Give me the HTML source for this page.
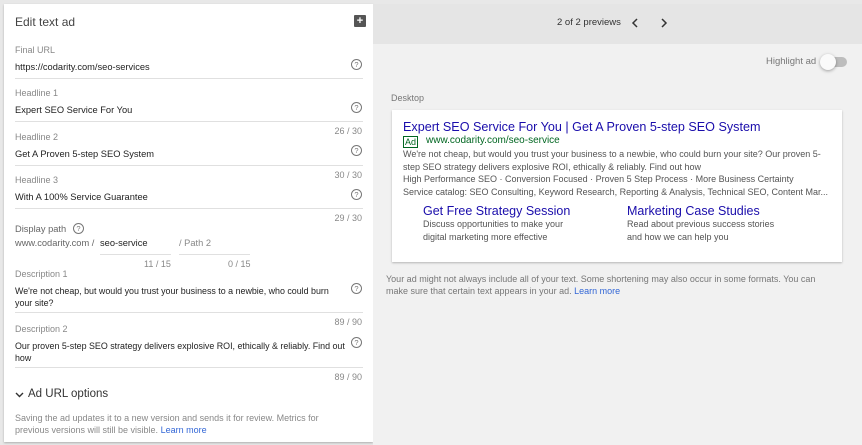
<!DOCTYPE html>
<html><head><meta charset="utf-8"><style>
*{margin:0;padding:0;box-sizing:border-box}
body{width:862px;height:445px;background:#e8e8e8;font-family:"Liberation Sans",Arial,sans-serif;position:relative;overflow:hidden;color:#202124}
.a{position:absolute;white-space:nowrap}
#left{position:absolute;left:4px;top:4px;width:369px;height:438px;background:#fff;box-shadow:0 1px 2px rgba(0,0,0,.25)}
.lbl{font-size:9px;color:#888}
.val{font-size:9.3px;color:#222}
.line{position:absolute;left:11px;width:348px;height:1px;background:#e0e0e0}
.cnt{font-size:9px;color:#888;right:11px}
.q{position:absolute;width:11px;height:11px;border:1px solid #777;border-radius:50%;font-size:7.5px;line-height:9px;text-align:center;color:#777}
#right{position:absolute;left:373px;top:4px;width:489px;height:441px;background:#f1f1f1}
#top{position:absolute;left:373px;top:4px;width:489px;height:40px;background:#e5e5e5}
.blue{color:#1a0dab}
</style></head><body>
<div id="left">
<div class="a" style="left:11px;top:11px;font-size:12px;color:#444">Edit text ad</div>
<div class="a" style="left:350px;top:11px;width:12px;height:12px;background:#555;border-radius:1px;color:#fff;font-size:11px;line-height:12px;text-align:center;font-weight:bold">+</div>

<div class="a lbl" style="left:11px;top:41px">Final URL</div>
<div class="a val" style="left:11px;top:58px">https://codarity.com/seo-services</div>
<div class="q" style="left:347px;top:55px">?</div>
<div class="line" style="top:74px"></div>

<div class="a lbl" style="left:11px;top:84px">Headline 1</div>
<div class="a val" style="left:11px;top:101px">Expert SEO Service For You</div>
<div class="q" style="left:347px;top:98px">?</div>
<div class="line" style="top:117px"></div>
<div class="a cnt" style="top:122px">26 / 30</div>

<div class="a lbl" style="left:11px;top:128px">Headline 2</div>
<div class="a val" style="left:11px;top:145px">Get A Proven 5-step SEO System</div>
<div class="q" style="left:347px;top:141px">?</div>
<div class="line" style="top:161px"></div>
<div class="a cnt" style="top:166px">30 / 30</div>

<div class="a lbl" style="left:11px;top:171px">Headline 3</div>
<div class="a val" style="left:11px;top:188px">With A 100% Service Guarantee</div>
<div class="q" style="left:347px;top:185px">?</div>
<div class="line" style="top:204px"></div>
<div class="a cnt" style="top:209px">29 / 30</div>

<div class="a" style="left:11px;top:220px;font-size:9.3px;color:#666">Display path</div>
<div class="q" style="left:69px;top:219px">?</div>
<div class="a" style="left:11px;top:234px;font-size:9.3px;color:#666">www.codarity.com /</div>
<div class="a val" style="left:96px;top:234px">seo-service</div>
<div class="a" style="left:175px;top:234px;font-size:9.3px;color:#888">/ Path 2</div>
<div class="a" style="left:96px;top:250px;width:71px;height:1px;background:#e0e0e0"></div>
<div class="a" style="left:175px;top:250px;width:71px;height:1px;background:#e0e0e0"></div>
<div class="a" style="left:140px;top:255px;font-size:9px;color:#888">11 / 15</div>
<div class="a" style="left:224px;top:255px;font-size:9px;color:#888">0 / 15</div>

<div class="a lbl" style="left:11px;top:265px">Description 1</div>
<div class="a" style="left:11px;top:281px;line-height:12px;font-size:8.9px;color:#222">We're not cheap, but would you trust your business to a newbie, who could burn<br>your site?</div>
<div class="q" style="left:347px;top:279px">?</div>
<div class="line" style="top:308px"></div>
<div class="a cnt" style="top:313px">89 / 90</div>

<div class="a lbl" style="left:11px;top:320px">Description 2</div>
<div class="a" style="left:11px;top:336px;line-height:12px;font-size:8.9px;color:#222">Our proven 5-step SEO strategy delivers explosive ROI, ethically &amp; reliably. Find out<br>how</div>
<div class="q" style="left:347px;top:333px">?</div>
<div class="line" style="top:363px"></div>
<div class="a cnt" style="top:368px">89 / 90</div>

<svg class="a" style="left:11px;top:388px" width="9" height="6"><path d="M1 1 4.5 4.5 8 1" fill="none" stroke="#333" stroke-width="1.4"/></svg>
<div class="a" style="left:24px;top:384px;font-size:11.5px;color:#333">Ad URL options</div>
<div class="a" style="left:11px;top:408px;font-size:9px;color:#888;line-height:12px">Saving the ad updates it to a new version and sends it for review. Metrics for<br>previous versions will still be visible. <span style="color:#3367d6">Learn more</span></div>
</div>

<div id="right"></div>
<div id="top"></div>
<div class="a" style="left:557px;top:17px;font-size:9.5px;color:#333">2 of 2 previews</div>
<svg class="a" style="left:631px;top:18px" width="8" height="10"><path d="M6 1 2 5 6 9" fill="none" stroke="#333" stroke-width="1.5"/></svg>
<svg class="a" style="left:660px;top:18px" width="8" height="10"><path d="M2 1 6 5 2 9" fill="none" stroke="#333" stroke-width="1.5"/></svg>

<div class="a" style="left:766px;top:56px;font-size:9.5px;color:#777">Highlight ad</div>
<div class="a" style="left:823px;top:57px;width:24px;height:10px;border-radius:5px;background:#bdbdbd"></div>
<div class="a" style="left:820px;top:54px;width:16px;height:16px;border-radius:50%;background:#fafafa;box-shadow:0 1px 3px rgba(0,0,0,.35)"></div>

<div class="a" style="left:391px;top:93px;font-size:9px;color:#777">Desktop</div>
<div class="a" style="left:392px;top:110px;width:450px;height:152px;background:#fff;box-shadow:0 1px 2px rgba(0,0,0,.25)"></div>
<div class="a blue" style="left:403px;top:120px;font-size:12.6px">Expert SEO Service For You | Get A Proven 5-step SEO System</div>
<div class="a" style="left:403px;top:136px;font-size:9px;color:#006621;border:1px solid #006621;padding:0 1px;line-height:10px">Ad</div>
<div class="a" style="left:426px;top:135px;font-size:10px;color:#006621">www.codarity.com/seo-service</div>
<div class="a" style="left:403px;top:148px;font-size:9px;color:#545454;line-height:12.5px">We're not cheap, but would you trust your business to a newbie, who could burn your site? Our proven 5-<br>step SEO strategy delivers explosive ROI, ethically &amp; reliably. Find out how<br>High Performance SEO · Conversion Focused · Proven 5 Step Process · More Business Certainty<br>Service catalog: SEO Consulting, Keyword Research, Reporting &amp; Analysis, Technical SEO, Content Mar...</div>
<div class="a blue" style="left:423px;top:204px;font-size:12.5px">Get Free Strategy Session</div>
<div class="a" style="left:423px;top:218px;font-size:9px;color:#545454;line-height:13px">Discuss opportunities to make your<br>digital marketing more effective</div>
<div class="a blue" style="left:627px;top:204px;font-size:12.5px">Marketing Case Studies</div>
<div class="a" style="left:627px;top:218px;font-size:9px;color:#545454;line-height:13px">Read about previous success stories<br>and how we can help you</div>

<div class="a" style="left:386px;top:273px;font-size:9px;color:#777;line-height:12px">Your ad might not always include all of your text. Some shortening may also occur in some formats. You can<br>make sure that certain text appears in your ad. <span style="color:#3367d6">Learn more</span></div>
</body></html>
